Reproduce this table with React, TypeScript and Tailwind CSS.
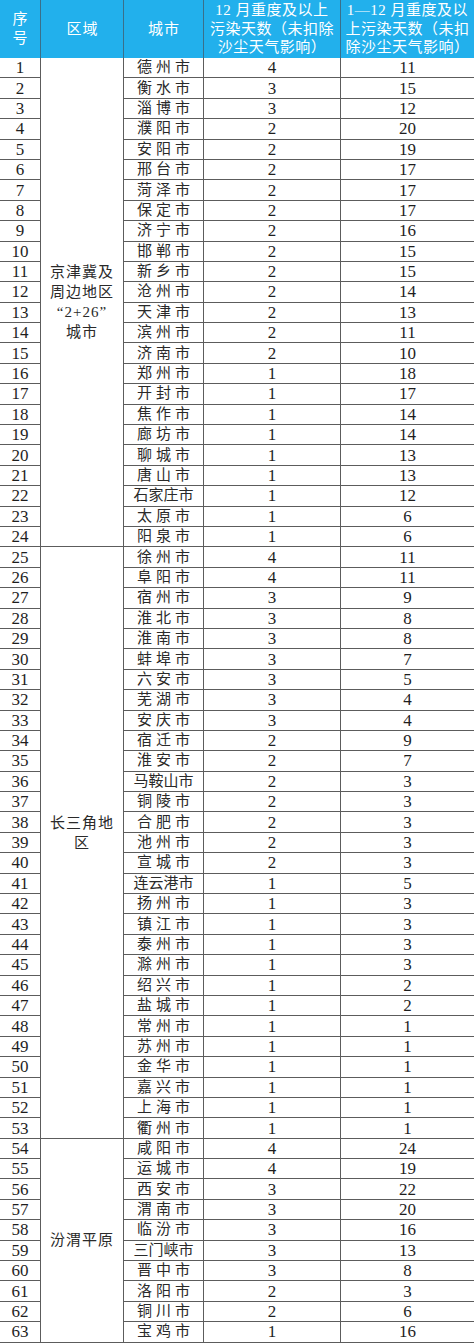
import React from "react";

type Row = [string, number, number];

const g1: Row[] = [
  ["德州市", 4, 11], ["衡水市", 3, 15], ["淄博市", 3, 12], ["濮阳市", 2, 20],
  ["安阳市", 2, 19], ["邢台市", 2, 17], ["菏泽市", 2, 17], ["保定市", 2, 17],
  ["济宁市", 2, 16], ["邯郸市", 2, 15], ["新乡市", 2, 15], ["沧州市", 2, 14],
  ["天津市", 2, 13], ["滨州市", 2, 11], ["济南市", 2, 10], ["郑州市", 1, 18],
  ["开封市", 1, 17], ["焦作市", 1, 14], ["廊坊市", 1, 14], ["聊城市", 1, 13],
  ["唐山市", 1, 13], ["石家庄市", 1, 12], ["太原市", 1, 6], ["阳泉市", 1, 6],
];
const g2: Row[] = [
  ["徐州市", 4, 11], ["阜阳市", 4, 11], ["宿州市", 3, 9], ["淮北市", 3, 8],
  ["淮南市", 3, 8], ["蚌埠市", 3, 7], ["六安市", 3, 5], ["芜湖市", 3, 4],
  ["安庆市", 3, 4], ["宿迁市", 2, 9], ["淮安市", 2, 7], ["马鞍山市", 2, 3],
  ["铜陵市", 2, 3], ["合肥市", 2, 3], ["池州市", 2, 3], ["宣城市", 2, 3],
  ["连云港市", 1, 5], ["扬州市", 1, 3], ["镇江市", 1, 3], ["泰州市", 1, 3],
  ["滁州市", 1, 3], ["绍兴市", 1, 2], ["盐城市", 1, 2], ["常州市", 1, 1],
  ["苏州市", 1, 1], ["金华市", 1, 1], ["嘉兴市", 1, 1], ["上海市", 1, 1],
  ["衢州市", 1, 1],
];
const g3: Row[] = [
  ["咸阳市", 4, 24], ["运城市", 4, 19], ["西安市", 3, 22], ["渭南市", 3, 20],
  ["临汾市", 3, 16], ["三门峡市", 3, 13], ["晋中市", 3, 8], ["洛阳市", 2, 3],
  ["铜川市", 2, 6], ["宝鸡市", 1, 16],
];

const cell = "flex items-center justify-center border-b border-r border-[#5c5c5c]";
const numText = "text-[17px] text-[#1e1e1e] leading-none";

function Group({
  rows,
  start,
  region,
  spanClass,
}: {
  rows: Row[];
  start: number;
  region: React.ReactNode;
  spanClass: string;
}) {
  return (
    <>
      {rows.map(([city, a, b], i) => (
        <React.Fragment key={city}>
          <div className={`${cell} ${numText}`}>{start + i}</div>
          {i === 0 && (
            <div
              className={`${spanClass} flex items-center justify-center border-b border-r border-[#5c5c5c] text-center text-[15px] leading-[20px] tracking-[1px] text-[#2a2a2a]`}
            >
              {region}
            </div>
          )}
          <div
            className={`${cell} text-[15px] leading-none text-[#2a2a2a] ${
              city.length === 3 ? "tracking-[4px] pl-[4px]" : "tracking-[0px]"
            }`}
          >
            {city}
          </div>
          <div className={`${cell} ${numText}`}>{a}</div>
          <div className={`flex items-center justify-center border-b border-[#5c5c5c] ${numText}`}>{b}</div>
        </React.Fragment>
      ))}
    </>
  );
}

export default function App() {
  const head =
    "flex flex-col items-center justify-center bg-[#22b0ec] text-white text-center border-r border-[#3a6f8a]";
  return (
    <div className="bg-white font-['Liberation_Serif','Noto_Sans_CJK_SC',serif]">
      <div className="grid w-[474px] grid-cols-[41px_83px_80px_137px_133px] grid-rows-[58px_repeat(63,20.4px)]">
        <div className={`${head} text-[15px] leading-[19px]`}>
          <span>序</span>
          <span>号</span>
        </div>
        <div className={`${head} text-[15px] tracking-[1px] pl-[1px]`}>区域</div>
        <div className={`${head} text-[15px] tracking-[1px] pl-[1px]`}>城市</div>
        <div className={`${head} text-[15px] leading-[18.5px] tracking-[0.5px]`}>
          <span>12 月重度及以上</span>
          <span>污染天数（未扣除</span>
          <span>沙尘天气影响）</span>
        </div>
        <div className="flex flex-col items-center justify-center bg-[#22b0ec] text-white text-center text-[15px] leading-[18.5px] tracking-[0.5px]">
          <span>1—12 月重度及以</span>
          <span>上污染天数（未扣</span>
          <span>除沙尘天气影响）</span>
        </div>

        <Group
          rows={g1}
          start={1}
          spanClass="row-span-24"
          region={
            <div className="flex flex-col items-center">
              <span>京津冀及</span>
              <span>周边地区</span>
              <span>“2+26”</span>
              <span>城市</span>
            </div>
          }
        />
        <Group
          rows={g2}
          start={25}
          spanClass="row-span-29"
          region={
            <div className="flex flex-col items-center pb-[20px]">
              <span>长三角地</span>
              <span>区</span>
            </div>
          }
        />
        <Group
          rows={g3}
          start={54}
          spanClass="row-span-10"
          region={<span>汾渭平原</span>}
        />
      </div>
    </div>
  );
}
